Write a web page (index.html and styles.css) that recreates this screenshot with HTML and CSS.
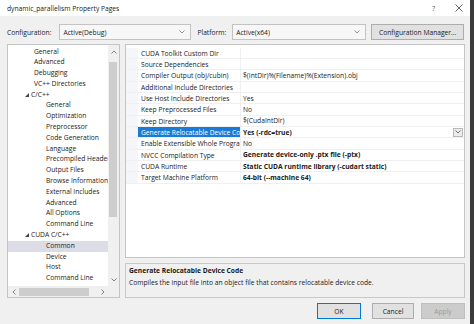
FILE: index.html
```html
<!DOCTYPE html>
<html>
<head>
  <meta charset="utf-8">
  <link rel="stylesheet" href="styles.css">
</head>
<body>
<div class=window>
<div class=dialog>
  <div class=titlebar>
    <span class=title>dynamic_parallelism Property Pages</span>
    <span class=help>?</span>
    <svg class=close width="8" height="8" viewBox="0 0 8 8"><path d="M0.5 0.5 L7.5 7.5 M7.5 0.5 L0.5 7.5" stroke="#333" stroke-width="0.8"/></svg>
  </div>

  <div class=configrow>
    <span class=label>Configuration:</span>
    <div class="combo config">
      <span>Active(Debug)</span>
      <svg width="6" height="4" viewBox="0 0 6 4"><path d="M0.5 0.5 L3 3 L5.5 0.5" fill="none" stroke="#777" stroke-width="0.8"/></svg>
    </div>
    <span class="label platlabel">Platform:</span>
    <div class="combo platform">
      <span>Active(x64)</span>
      <svg width="6" height="4" viewBox="0 0 6 4"><path d="M0.5 0.5 L3 3 L5.5 0.5" fill="none" stroke="#777" stroke-width="0.8"/></svg>
    </div>
    <button class="btn manager">Configuration Manager...</button>
  </div>

  <div class=main>
    <div class=tree>
      <div class=treebody>
        <div class=items>
          <div class="item l1">General</div>
          <div class="item l1">Advanced</div>
          <div class="item l1">Debugging</div>
          <div class="item l1">VC++ Directories</div>
          <div class="item exp"><svg class=tri width="4" height="4" viewBox="0 0 4 4"><path d="M4 0 L4 4 L0 4 Z" fill="#444"/></svg>C/C++</div>
          <div class="item l2">General</div>
          <div class="item l2">Optimization</div>
          <div class="item l2">Preprocessor</div>
          <div class="item l2">Code Generation</div>
          <div class="item l2">Language</div>
          <div class="item l2">Precompiled Headers</div>
          <div class="item l2">Output Files</div>
          <div class="item l2">Browse Information</div>
          <div class="item l2">External Includes</div>
          <div class="item l2">Advanced</div>
          <div class="item l2">All Options</div>
          <div class="item l2">Command Line</div>
          <div class="item exp"><svg class=tri width="4" height="4" viewBox="0 0 4 4"><path d="M4 0 L4 4 L0 4 Z" fill="#444"/></svg>CUDA C/C++</div>
          <div class="item l2 selected">Common</div>
          <div class="item l2">Device</div>
          <div class="item l2">Host</div>
          <div class="item l2">Command Line</div>
        </div>
        <div class=vscroll>
          <div class=arrow><svg width="6" height="4" viewBox="0 0 6 4"><path d="M0.5 3.5 L3 1 L5.5 3.5" fill="none" stroke="#666" stroke-width="0.8"/></svg></div>
          <div class=vtrack><div class=vthumb></div></div>
          <div class=arrow><svg width="6" height="4" viewBox="0 0 6 4"><path d="M0.5 0.5 L3 3 L5.5 0.5" fill="none" stroke="#666" stroke-width="0.8"/></svg></div>
        </div>
      </div>
      <div class=hscroll>
        <div class=harrow><svg width="4" height="6" viewBox="0 0 4 6"><path d="M3.5 0.5 L1 3 L3.5 5.5" fill="none" stroke="#666" stroke-width="0.8"/></svg></div>
        <div class=htrack><div class=hthumb></div></div>
        <div class=harrow><svg width="4" height="6" viewBox="0 0 4 6"><path d="M0.5 0.5 L3 3 L0.5 5.5" fill="none" stroke="#666" stroke-width="0.8"/></svg></div>
        <div class=corner></div>
      </div>
    </div>

    <div class=right>
      <div class=grid>
        <div class=row><div class=gut></div><div class=name>CUDA Toolkit Custom Dir</div><div class=value></div></div>
        <div class=row><div class=gut></div><div class=name>Source Dependencies</div><div class=value></div></div>
        <div class=row><div class=gut></div><div class=name>Compiler Output (obj/cubin)</div><div class=value>$(IntDir)%(Filename)%(Extension).obj</div></div>
        <div class=row><div class=gut></div><div class=name>Additional Include Directories</div><div class=value></div></div>
        <div class=row><div class=gut></div><div class=name>Use Host Include Directories</div><div class=value>Yes</div></div>
        <div class=row><div class=gut></div><div class=name>Keep Preprocessed Files</div><div class=value>No</div></div>
        <div class=row><div class=gut></div><div class=name>Keep Directory</div><div class=value>$(CudaIntDir)</div></div>
        <div class="row sel"><div class=gut></div><div class=name>Generate Relocatable Device Code</div><div class="value bold">Yes (-rdc=true)
          <div class=drop><svg width="6" height="4" viewBox="0 0 6 4"><path d="M0.5 0.5 L3 3 L5.5 0.5" fill="none" stroke="#555" stroke-width="0.8"/></svg></div></div></div>
        <div class=row><div class=gut></div><div class=name>Enable Extensible Whole Program Compilation</div><div class=value>No</div></div>
        <div class=row><div class=gut></div><div class=name>NVCC Compilation Type</div><div class="value bold">Generate device-only .ptx file (-ptx)</div></div>
        <div class=row><div class=gut></div><div class=name>CUDA Runtime</div><div class="value bold">Static CUDA runtime library (-cudart static)</div></div>
        <div class=row><div class=gut></div><div class=name>Target Machine Platform</div><div class="value bold">64-bit (--machine 64)</div></div>
      </div>
      <div class=details>
        <div class=dtitle>Generate Relocatable Device Code</div>
        <div class=dtext>Compiles the input file into an object file that contains relocatable device code.</div>
      </div>
    </div>
  </div>

  <div class=buttons>
    <button class="btn ok">OK</button>
    <button class="btn cancel">Cancel</button>
    <button class="btn apply">Apply</button>
  </div>
</div>
<div class=edge></div>
</div>
</body>
</html>
```

FILE: styles.css
```css
html, body {
  margin: 0;
  padding: 0;
  width: 474px;
  height: 324px;
  overflow: hidden;
  background: #f0f0f0;
  color: #1a1a1a;
  font-family: "Open Sans", sans-serif;
  font-size: 6.7px;
}
.window {
  display: flex;
  height: 324px;
}
.dialog {
  width: 470px;
  display: flex;
  flex-direction: column;
}
.edge {
  flex: 1;
  background: #3b3b3b;
}
.titlebar {
  height: 16px;
  background: #ffffff;
  display: flex;
  align-items: center;
  padding-left: 7px;
}
.title {
  flex: 1;
}
.help {
  margin-right: 20px;
  font-size: 6.5px;
  color: #444;
}
.close {
  margin-right: 7px;
}

/* configuration row */
.configrow {
  display: flex;
  align-items: center;
  height: 16px;
  margin-top: 8px;
  padding-left: 7px;
}
.label {
  margin-right: 8px;
}
.platlabel {
  margin-left: 6px;
  margin-right: 6px;
}
.combo {
  box-sizing: border-box;
  height: 16px;
  border: 1px solid #c3c3c3;
  background: #f7f7f7;
  display: flex;
  align-items: center;
  justify-content: space-between;
  padding: 0 5px 0 3px;
}
.config {
  width: 132px;
}
.platform {
  width: 134px;
}
.btn {
  box-sizing: border-box;
  height: 16px;
  border: 1px solid #adadad;
  background: #e1e1e1;
  color: #1a1a1a;
  font-family: "Open Sans", sans-serif;
  font-size: 6.7px;
  padding: 0;
}
.manager {
  width: 93px;
  margin-left: 5px;
}

/* main area */
.main {
  display: flex;
  margin-top: 4px;
  height: 254px;
  padding-left: 7px;
}
.tree {
  box-sizing: border-box;
  width: 113px;
  border: 1px solid #c4c4c4;
  background: #ffffff;
  display: flex;
  flex-direction: column;
}
.treebody {
  flex: 1;
  display: flex;
  overflow: hidden;
}
.items {
  flex: 1;
  overflow: hidden;
  padding-top: 1.5px;
}
.item {
  height: 10.8px;
  line-height: 10.8px;
  white-space: nowrap;
  display: flex;
  align-items: center;
}
.l1 {
  padding-left: 26px;
}
.l2 {
  padding-left: 38px;
}
.exp {
  padding-left: 17px;
}
.tri {
  margin-right: 2px;
}
.selected {
  background: #dcdce6;
}
.vscroll {
  width: 11px;
  background: #f0f0f0;
  display: flex;
  flex-direction: column;
}
.arrow {
  height: 13px;
  display: flex;
  align-items: center;
  justify-content: center;
}
.vtrack {
  flex: 1;
  padding: 4px 2px 0 1px;
}
.vthumb {
  height: 155px;
  background: #cdcdcd;
}
.hscroll {
  height: 11px;
  display: flex;
  background: #f0f0f0;
}
.harrow {
  width: 11px;
  display: flex;
  align-items: center;
  justify-content: center;
}
.htrack {
  flex: 1;
  padding: 2px 0 1px 0;
}
.hthumb {
  width: 70px;
  height: 100%;
  background: #cdcdcd;
}
.corner {
  width: 11px;
  background: #f0f0f0;
}

.right {
  width: 340px;
  margin-left: 5px;
  display: flex;
  flex-direction: column;
}
.grid {
  box-sizing: border-box;
  height: 214px;
  border: 1px solid #c4c4c4;
  background: #ffffff;
  padding-top: 2.5px;
}
.row {
  display: flex;
  height: 11.35px;
  line-height: 11px;
  box-sizing: border-box;
  border-bottom: 1px solid #f0f0f0;
  white-space: nowrap;
}
.gut {
  width: 12px;
  background: #f4f6f9;
}
.name {
  width: 103px;
  padding-left: 3px;
  box-sizing: border-box;
  overflow: hidden;
  border-right: 1px solid #f0f0f0;
}
.value {
  flex: 1;
  padding-left: 2px;
  display: flex;
  align-items: center;
}
.bold {
  font-weight: bold;
}
.sel .name {
  background: #1a7ad6;
  color: #ffffff;
}
.drop {
  margin-left: auto;
  margin-right: 1px;
  box-sizing: border-box;
  width: 10px;
  height: 9px;
  border: 1px solid #b9b9b9;
  background: #ececec;
  display: flex;
  align-items: center;
  justify-content: center;
}
.details {
  box-sizing: border-box;
  height: 35px;
  margin-top: 5px;
  border: 1px solid #c8c8c8;
  background: #f0f0f0;
  padding: 2px 3px;
}
.dtitle {
  font-weight: bold;
  line-height: 10px;
}
.dtext {
  margin-top: 2px;
  line-height: 10px;
}

/* bottom buttons */
.buttons {
  display: flex;
  justify-content: flex-end;
  margin-top: 5px;
  padding-right: 5px;
}
.ok {
  width: 44px;
  border-color: #0078d7;
}
.cancel {
  width: 42px;
  margin-left: 11px;
}
.apply {
  width: 44px;
  margin-left: 7px;
  background: #cccccc;
  border-color: #bfbfbf;
  color: #9a9a9a;
}
```
